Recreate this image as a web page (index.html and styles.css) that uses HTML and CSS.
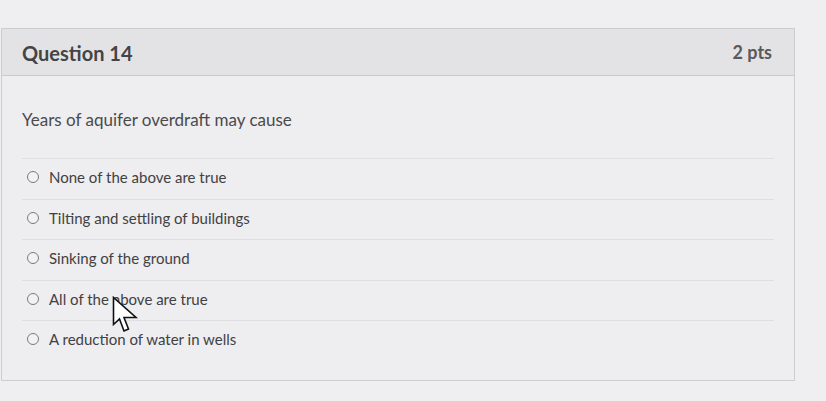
FILE: index.html
```
<!DOCTYPE html>
<html>
<head>
<meta charset="utf-8">
<link rel="stylesheet" href="styles.css">
</head>
<body>
<div class="page">
  <div class="card">
    <div class="header">
      <span class="title">Question 14</span>
      <span class="pts">2 pts</span>
    </div>
    <div class="body">
      <div class="question">Years of aquifer overdraft may cause</div>
      <div class="option"><span class="radio"></span><span>None of the above are true</span></div>
      <div class="option"><span class="radio"></span><span>Tilting and settling of buildings</span></div>
      <div class="option"><span class="radio"></span><span>Sinking of the ground</span></div>
      <div class="option"><span class="radio"></span><span>All of the above are true</span></div>
      <div class="option"><span class="radio"></span><span>A reduction of water in wells</span></div>
    </div>
  </div>
  <svg class="cursor" width="28" height="40" viewBox="0 0 28 40">
    <path d="M1.5 1.5 L1.5 28.5 L7.5 23 L12 35 L16.5 33 L12 21.5 L24 21.5 Z" fill="#ffffff" stroke="#111111" stroke-width="1.6" stroke-linejoin="miter"/>
  </svg>
</div>
</body>
</html>
```
FILE: styles.css
```
html, body {
  margin: 0;
  padding: 0;
  background: #efeef0;
}
body {
  font-family: Lato, "Open Sans", "Liberation Sans", sans-serif;
  color: #3f3f41;
  width: 826px;
  height: 401px;
  overflow: hidden;
}
.page {
  position: relative;
  padding: 28px 31px 0 1px;
}
.card {
  border: 1px solid #cdcdcf;
  background: #eeedef;
}
.header {
  height: 46px;
  background: #e3e3e5;
  border-bottom: 1px solid #c9c9cb;
  display: flex;
  justify-content: space-between;
  align-items: center;
  padding: 0 22px 0 20px;
}
.title {
  font-size: 20px;
  font-weight: 700;
  color: #444446;
  position: relative;
  top: 1px;
}
.pts {
  font-size: 18px;
  font-weight: 700;
  color: #5a5a5c;
}
.body {
  padding: 0 20px 19px 20px;
}
.question {
  padding-top: 33px;
  line-height: 22px;
  font-size: 17px;
  margin-bottom: 27px;
  color: #4a4a4c;
}
.option {
  border-top: 1px solid #dfdfe1;
  height: 40.5px;
  display: flex;
  align-items: center;
  font-size: 15px;
  color: #414143;
  padding-bottom: 3px;
  box-sizing: border-box;
}
.radio {
  width: 10px;
  height: 10px;
  border: 1.5px solid #7a7a7d;
  border-radius: 50%;
  margin-left: 5px;
  margin-right: 10px;
  background: #f2f2f4;
  flex: none;
}
.cursor {
  position: absolute;
  left: 112px;
  top: 296px;
}
```
